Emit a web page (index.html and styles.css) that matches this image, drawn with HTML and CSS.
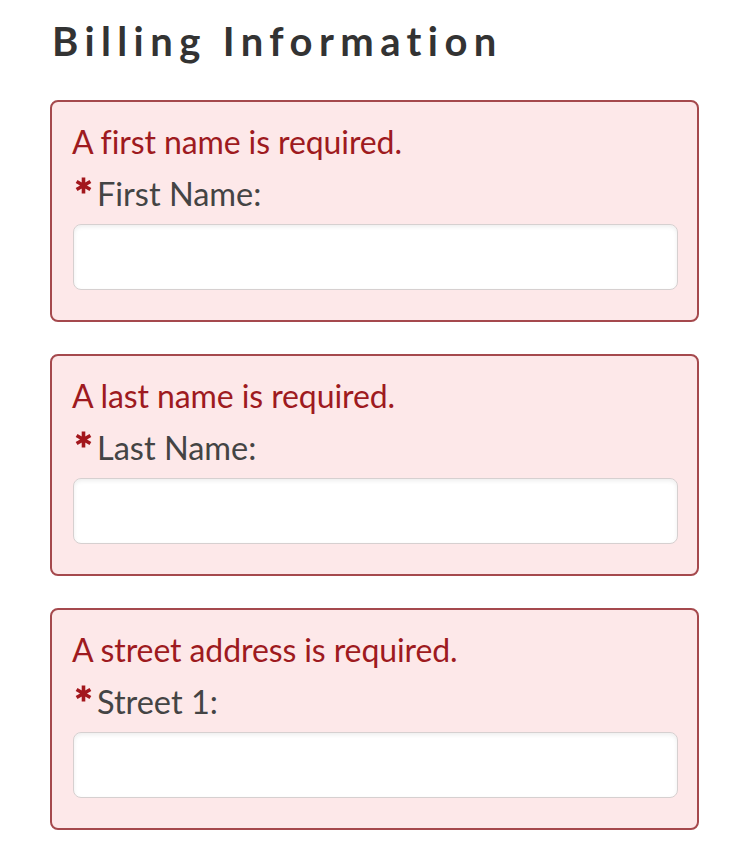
FILE: index.html
```html
<!DOCTYPE html>
<html lang="en">
<head>
    <meta charset="UTF-8">
    <meta name="viewport" content="width=device-width, initial-scale=1.0">
    <title>Billing Information</title>
    <link rel="stylesheet" href="styles.css">
</head>
<body>
    <h1 class="section-title">Billing Information</h1>

    <!-- First name -->
    <div class="field-error">
        <p class="error-msg">A first name is required.</p>
        <label class="field-label" for="firstName">
            <svg class="req" viewBox="0 0 17 17" aria-hidden="true"><path d="M8.5 0.5V16.5M1.6 4.5L15.4 12.5M1.6 12.5L15.4 4.5"/></svg>
            First Name:
        </label>
        <input class="text-input" type="text" id="firstName">
    </div>

    <!-- Last name -->
    <div class="field-error">
        <p class="error-msg">A last name is required.</p>
        <label class="field-label" for="lastName">
            <svg class="req" viewBox="0 0 17 17" aria-hidden="true"><path d="M8.5 0.5V16.5M1.6 4.5L15.4 12.5M1.6 12.5L15.4 4.5"/></svg>
            Last Name:
        </label>
        <input class="text-input" type="text" id="lastName">
    </div>

    <!-- Street -->
    <div class="field-error">
        <p class="error-msg">A street address is required.</p>
        <label class="field-label" for="street1">
            <svg class="req" viewBox="0 0 17 17" aria-hidden="true"><path d="M8.5 0.5V16.5M1.6 4.5L15.4 12.5M1.6 12.5L15.4 4.5"/></svg>
            Street 1:
        </label>
        <input class="text-input" type="text" id="street1">
    </div>
</body>
</html>
```

FILE: styles.css
```css
/* Base */
* {
    margin: 0;
    padding: 0;
    box-sizing: border-box;
}

body {
    font-family: 'Lato', 'Liberation Sans', sans-serif;
    background: #fff;
    color: #444;
    padding: 17px 51px 0 50px;
}

/* Heading */
.section-title {
    font-size: 40px;
    line-height: 48px;
    font-weight: 700;
    letter-spacing: 6.4px;
    color: #333;
    margin-left: 2px;
    margin-bottom: 35px;
}

/* Error Blocks */
.field-error {
    background: #fde8e9;
    border: 2px solid #a5494d;
    border-radius: 8px;
    padding: 24px 20px 30px 20px;
    margin-bottom: 32px;
}

.error-msg {
    font-size: 32px;
    line-height: 32px;
    letter-spacing: -0.1px;
    color: #9e1a20;
}

.field-label {
    display: flex;
    align-items: flex-start;
    margin-top: 18px;
    font-size: 32.5px;
    line-height: 36px;
    color: #444;
}

.req {
    flex: none;
    width: 17px;
    height: 17px;
    margin: 1px 5px 0 3px;
    fill: none;
    stroke: #a3171d;
    stroke-width: 3.6;
}

.text-input {
    display: block;
    width: 100%;
    height: 66px;
    margin-top: 12px;
    margin-left: 1px;
    background: #fff;
    border: 1px solid #d6d0d0;
    border-radius: 8px;
    box-shadow: inset 0 2px 4px rgba(0, 0, 0, 0.07);
    font-family: inherit;
    font-size: 28px;
    padding: 0 14px;
    outline: none;
}
```
